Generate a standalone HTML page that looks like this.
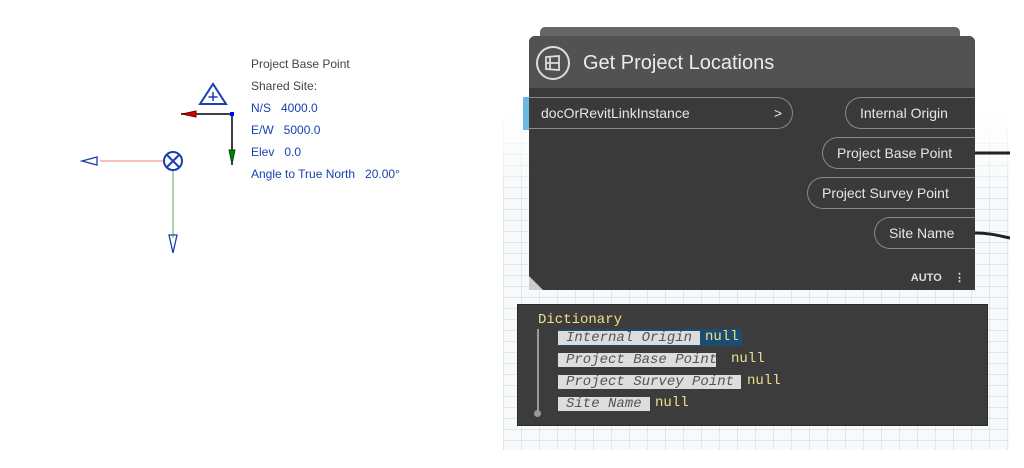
<!DOCTYPE html>
<html><head><style>
body{margin:0;width:1024px;height:468px;background:#fff;position:relative;overflow:hidden;font-family:"Liberation Sans",sans-serif}
.t{position:absolute;left:251px;font-size:12px;color:#1a3fb0}
.bg{position:absolute;left:503px;top:0;width:506px;height:450px;background:#f7f9fa;
background-image:linear-gradient(rgba(160,185,205,.28) 1px,transparent 1px),linear-gradient(90deg,rgba(160,185,205,.28) 1px,transparent 1px);background-size:18px 11px}
.fade{position:absolute;left:503px;top:0;width:506px;height:200px;background:linear-gradient(#fff 55%,rgba(255,255,255,0))}
.node{position:absolute;left:529px;top:36px;width:446px;height:254px;background:#3a3a3a;border-radius:6px 6px 0 0}
.hdr{position:absolute;left:0;top:0;width:446px;height:52px;background:#525252;border-radius:6px 6px 0 0}
.pill{position:absolute;height:32px;border:1px solid #8a8a8a;border-right:none;border-radius:16px 0 0 16px;color:#e6e6e6;font-size:14px;line-height:31px;box-sizing:border-box;padding-left:14px}
.m{font-family:"Liberation Mono",monospace;font-size:14px;white-space:nowrap}
.k{position:absolute;left:558px;height:14px;background:#ddd;color:#555;font-style:italic;line-height:14px;padding-left:8px;box-sizing:border-box;overflow:hidden}
.n{position:absolute;color:#eee08a}
</style></head><body>
<div class="t" style="top:57px;color:#444">Project Base Point</div>
<div class="t" style="top:79px;color:#444">Shared Site:</div>
<div class="t" style="top:101px">N/S &nbsp; 4000.0</div>
<div class="t" style="top:123px">E/W &nbsp; 5000.0</div>
<div class="t" style="top:145px">Elev &nbsp; 0.0</div>
<div class="t" style="top:167px">Angle to True North &nbsp; 20.00°</div>
<svg style="position:absolute;left:0;top:0" width="500" height="468">
<path d="M200,104 L213,84 L226,104 Z" fill="none" stroke="#1a3fb0" stroke-width="2"/>
<path d="M213,92v9M208.5,97h9" stroke="#1a3fb0" stroke-width="1.5"/>
<path d="M181,114H232V165" fill="none" stroke="#000" stroke-width="1.5"/>
<path d="M182,114l14,-3v6z" fill="#d00" stroke="#600"/>
<rect x="230" y="112" width="4" height="4" fill="#00f"/>
<path d="M229,150l3,14l3,-14z" fill="#080" stroke="#040"/>
<path d="M100,161H165" stroke="#f08080"/>
<path d="M82,161l15,-4v8z" fill="none" stroke="#1a3fb0" stroke-width="1.3"/>
<path d="M173,170V238" stroke="#5a5"/>
<path d="M169,235l4,18l4,-18z" fill="none" stroke="#1a3fb0" stroke-width="1.3"/>
<circle cx="173" cy="161" r="9" fill="#fff" stroke="#1a3fb0" stroke-width="2"/>
<path d="M167,155l12,12M179,155l-12,12" stroke="#1a3fb0" stroke-width="2"/>
</svg>
<div class="bg"></div><div class="fade"></div>
<div style="position:absolute;left:540px;top:27px;width:420px;height:12px;background:#666;border-radius:5px 5px 0 0"></div>
<svg style="position:absolute;left:960px;top:140px" width="50" height="110"><path d="M15,13H50M15,93C30,93 40,96 50,98" stroke="#222" stroke-width="3" fill="none"/></svg>
<div class="node">
<div class="hdr"><svg style="position:absolute;left:6px;top:9px" width="36" height="36"><circle cx="18" cy="18" r="16" fill="none" stroke="#ddd" stroke-width="2"/><path d="M11,12l13,-1v14l-13,-1zM15,12v12M11,18h13" stroke="#ddd" stroke-width="1.8" fill="none"/></svg>
<div style="position:absolute;left:54px;top:16px;color:#ececec;font-size:20px">Get Project Locations</div></div>
<div style="position:absolute;right:10px;bottom:6px;color:#ddd;font-size:11px;font-weight:bold">AUTO &nbsp; &nbsp;⋮</div>
<div style="position:absolute;left:0;bottom:0;width:0;height:0;border-left:14px solid #ccc;border-top:14px solid transparent"></div>
</div>
<div style="position:absolute;left:523px;top:97px;width:6px;height:33px;background:#6ab8e4"></div>
<div class="pill" style="left:529px;top:97px;width:264px;border:1px solid #8a8a8a;border-left:none;border-radius:0 16px 16px 0;padding-left:12px">docOrRevitLinkInstance<span style="position:absolute;right:10px">&gt;</span></div>
<div class="pill" style="left:845px;top:97px;width:130px">Internal Origin</div>
<div class="pill" style="left:822px;top:137px;width:153px">Project Base Point</div>
<div class="pill" style="left:807px;top:177px;width:168px">Project Survey Point</div>
<div class="pill" style="left:874px;top:217px;width:101px">Site Name</div>
<div style="position:absolute;left:517px;top:304px;width:469px;height:120px;background:#3c3c3c;border:1px solid #2a2a2a"></div>
<div class="m n" style="left:538px;top:312px">Dictionary</div>
<div style="position:absolute;left:537px;top:329px;width:2px;height:83px;background:#999"></div>
<div style="position:absolute;left:534px;top:410px;width:7px;height:7px;border-radius:50%;background:#999"></div>
<div style="position:absolute;left:558px;top:329px;width:184px;height:17px;background:#1d4d6e"></div>
<div class="m k" style="top:331px;width:142px">Internal Origin</div><div class="m n" style="left:705px;top:329px">null</div>
<div class="m k" style="top:353px;width:158px">Project Base Point</div><div class="m n" style="left:731px;top:351px">null</div>
<div class="m k" style="top:375px;width:183px">Project Survey Point</div><div class="m n" style="left:747px;top:373px">null</div>
<div class="m k" style="top:397px;width:92px">Site Name</div><div class="m n" style="left:655px;top:395px">null</div>
</body></html>
